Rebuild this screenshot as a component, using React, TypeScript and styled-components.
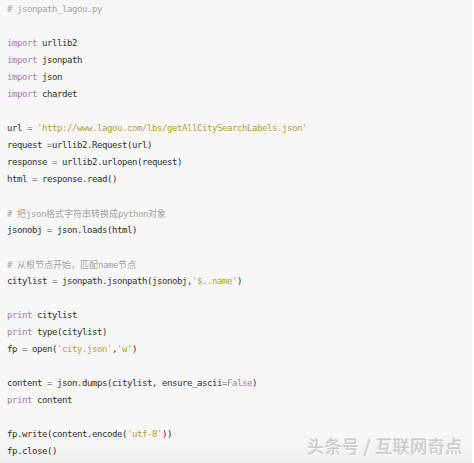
import React from "react";
import styled, { createGlobalStyle } from "styled-components";

const Global = createGlobalStyle`
  html, body { margin: 0; padding: 0; background: #f7f7f7; }
`;

const Frame = styled.div`
  position: relative;
  width: 472px;
  height: 463px;
  overflow: hidden;
  background: #f7f7f7;
  border-right: 2px solid #ffffff;
`;

const Code = styled.pre`
  margin: 0;
  padding: 1px 0 0 7px;
  font-family: "DejaVu Sans Mono", "Liberation Mono", "Noto Sans CJK SC", monospace;
  font-size: 9px;
  letter-spacing: -0.42px;
  line-height: 17px;
  color: #2f2f2f;
  white-space: pre;
`;

const Line = styled.div`
  height: 17px;
`;

const Kw = styled.span`
  color: #a47cb0;
`;

const Str = styled.span`
  color: #b3a233;
`;

const Op = styled.span`
  color: #777777;
`;

const Comment = styled.span`
  color: #a3a3a3;
`;

const Cjk = styled.span`
  font-family: "Noto Sans CJK SC", sans-serif;
  font-size: 9px;
  letter-spacing: 0;
`;

const Shade = styled.div`
  position: absolute;
  left: 0;
  right: 0;
  bottom: 0;
  height: 26px;
  background: linear-gradient(to bottom, rgba(0,0,0,0), rgba(0,0,0,0.035));
  pointer-events: none;
`;

const Watermark = styled.div`
  position: absolute;
  right: 9px;
  bottom: 5px;
  font-family: "Noto Sans CJK SC", sans-serif;
  font-size: 17px;
  letter-spacing: 0.5px;
  color: #cbcbcb;
  text-shadow: 1px 1px 0 #ffffff, -1px -1px 0 rgba(0,0,0,0.15);
`;

export default function App() {
  return (
    <>
      <Global />
      <Frame>
        <Code>
          <Line><Comment># jsonpath_lagou.py</Comment></Line>
          <Line />
          <Line><Kw>import</Kw> urllib2</Line>
          <Line><Kw>import</Kw> jsonpath</Line>
          <Line><Kw>import</Kw> json</Line>
          <Line><Kw>import</Kw> chardet</Line>
          <Line />
          <Line>url <Op>=</Op> <Str>'http://www.lagou.com/lbs/getAllCitySearchLabels.json'</Str></Line>
          <Line>request <Op>=</Op>urllib2.Request(url)</Line>
          <Line>response <Op>=</Op> urllib2.urlopen(request)</Line>
          <Line>html <Op>=</Op> response.read()</Line>
          <Line />
          <Line><Comment># <Cjk>把</Cjk>json<Cjk>格式字符串转换成</Cjk>python<Cjk>对象</Cjk></Comment></Line>
          <Line>jsonobj <Op>=</Op> json.loads(html)</Line>
          <Line />
          <Line><Comment># <Cjk>从根节点开始，匹配</Cjk>name<Cjk>节点</Cjk></Comment></Line>
          <Line>citylist <Op>=</Op> jsonpath.jsonpath(jsonobj,<Str>'$..name'</Str>)</Line>
          <Line />
          <Line><Kw>print</Kw> citylist</Line>
          <Line><Kw>print</Kw> type(citylist)</Line>
          <Line>fp <Op>=</Op> open(<Str>'city.json'</Str>,<Str>'w'</Str>)</Line>
          <Line />
          <Line>content <Op>=</Op> json.dumps(citylist, ensure_ascii<Op>=</Op><Kw>False</Kw>)</Line>
          <Line><Kw>print</Kw> content</Line>
          <Line />
          <Line>fp.write(content.encode(<Str>'utf-8'</Str>))</Line>
          <Line>fp.close()</Line>
        </Code>
        <Shade />
        <Watermark>头条号 / 互联网奇点</Watermark>
      </Frame>
    </>
  );
}
